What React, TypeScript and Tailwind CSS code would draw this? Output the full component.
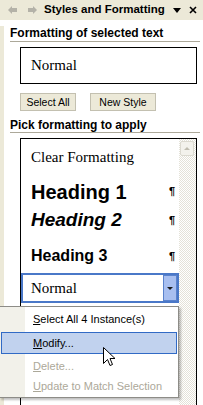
import React from "react";

const sans = "font-['Liberation_Sans',Arial,sans-serif]";
const serif = "font-['Liberation_Serif','Times_New_Roman',serif]";

function NavArrow({ dir }: { dir: "left" | "right" }) {
  return (
    <svg width="9" height="8" viewBox="0 0 9 8" className={dir === "left" ? "" : "-scale-x-100"}>
      <path d="M0 4 L4 0 L4 2 L9 2 L9 6 L4 6 L4 8 Z" fill="#b4b2a8" />
    </svg>
  );
}

function Cursor() {
  return (
    <svg width="13" height="21" viewBox="0 0 13 21">
      <path
        d="M0.5 0.5 L0.5 16.5 L4.5 12.5 L7 18.5 L9.5 17.5 L7 11.5 L12 11.5 Z"
        fill="#fff"
        stroke="#000"
        strokeWidth="1"
        strokeLinejoin="miter"
      />
    </svg>
  );
}

export default function App() {
  return (
    <div className={`relative w-[203px] h-[405px] overflow-hidden bg-white ${sans}`}>
      {/* task pane title bar */}
      <div className="h-[20px] bg-[#ECE9D8] flex items-center pl-[8px] pr-[6px]">
        <NavArrow dir="left" />
        <div className="w-[11px]" />
        <NavArrow dir="right" />
        <span className="ml-[7px] text-[11.5px] font-bold text-black leading-none whitespace-nowrap">Styles and Formatting</span>
        <svg width="8" height="5" viewBox="0 0 8 5" className="ml-auto shrink-0">
          <path d="M0 0 L8 0 L4 5 Z" fill="#000" />
        </svg>
        <svg width="8" height="8" viewBox="0 0 8 8" className="ml-[8px] shrink-0">
          <path d="M1 1 L7 7 M7 1 L1 7" stroke="#000" strokeWidth="1.6" />
        </svg>
      </div>

      <div className="border-l-[4px] border-[#ECE9D8] h-[385px]">
        {/* current selection */}
        <div className="ml-[6px] mr-[3px] mt-[6px] h-[16px] border-b border-[#aca899] text-[12px] font-bold leading-[15px] text-black">
          Formatting of selected text
        </div>
        <div className="ml-[16px] mt-[5px] w-[177px] h-[37px] border border-black flex items-center pl-[10px]">
          <span className={`${serif} text-[15px] text-black`}>Normal</span>
        </div>
        <div className="ml-[16px] mt-[9px] flex gap-[14px]">
          <button className="w-[56px] h-[18px] bg-[#ECE9D8] border border-[#c3c0b0] text-[10.5px] text-black leading-none">
            Select All
          </button>
          <button className="w-[66px] h-[18px] bg-[#ECE9D8] border border-[#c3c0b0] text-[10.5px] text-black leading-none">
            New Style
          </button>
        </div>

        {/* style list */}
        <div className="ml-[6px] mr-[3px] mt-[7px] h-[15px] border-b border-[#aca899] text-[12px] font-bold leading-[14px] text-black">
          Pick formatting to apply
        </div>
        <div className="ml-[16px] mt-[5px] w-[177px] h-[280px] border border-black flex">
          <div className="w-[159px] flex flex-col">
            <div className="h-[36px] flex items-center pl-[10px]">
              <span className={`${serif} text-[15px] text-black`}>Clear Formatting</span>
            </div>
            <div className="h-[31px] flex items-center pl-[10px] pr-[4px] pt-[2px]">
              <span className="text-[20px] font-bold text-black">Heading 1</span>
              <span className="ml-auto text-[11px] font-bold">¶</span>
            </div>
            <div className="h-[28px] flex items-center pl-[10px] pr-[4px]">
              <span className="text-[19px] font-bold italic text-black">Heading 2</span>
              <span className="ml-auto text-[11px] font-bold">¶</span>
            </div>
            <div className="h-[39px] flex items-center pl-[10px] pr-[4px] pt-[5px]">
              <span className="text-[16px] font-bold text-black">Heading 3</span>
              <span className="ml-auto text-[11px] font-bold">¶</span>
            </div>
            <div className="h-[30px] border-2 border-[#4a78c8] flex items-center">
              <span className={`${serif} pl-[8px] text-[15px] text-black`}>Normal</span>
              <div className="ml-auto h-full w-[14px] bg-[#a8bff0] border border-[#5a82cc] flex items-center justify-center">
                <svg width="6" height="3" viewBox="0 0 6 3">
                  <path d="M0 0 L6 0 L3 3 Z" fill="#1a1a1a" />
                </svg>
              </div>
            </div>
          </div>
          <div className="w-[17px] h-full bg-[repeating-conic-gradient(#ffffff_0%_25%,#e4e2d8_0%_50%)] bg-[length:2px_2px] pt-[2px] pl-[1px]">
            <div className="w-[14px] h-[15px] bg-[#f3f2ec] border border-[#dcdad0] rounded-[2px] flex items-center justify-center">
              <svg width="6" height="3" viewBox="0 0 6 3">
                <path d="M0 3 L6 3 L3 0 Z" fill="#c0bdb0" />
              </svg>
            </div>
          </div>
        </div>
      </div>

      {/* context menu */}
      <div className="absolute left-[-1px] top-[306px] w-[180px] border border-[#8d8c87] bg-white shadow-[2px_2px_2px_rgba(0,0,0,0.25)] text-[11px]">
        <div className="absolute left-0 top-0 bottom-0 w-[25px] bg-[#f2f1ea]" />
        <div className="relative h-[24px] flex items-center pl-[33px] text-black">
          <span><span className="underline">S</span>elect All 4 Instance(s)</span>
        </div>
        <div className="relative h-[24px] px-[1px] py-[1px]">
          <div className="h-full bg-[#c1d2ee] border border-[#316ac5] flex items-center pl-[31px] text-black">
            <span><span className="underline">M</span>odify...</span>
          </div>
        </div>
        <div className="relative h-[23px] flex items-center pl-[33px] text-[#aca899]">
          <span><span className="underline">D</span>elete...</span>
        </div>
        <div className="relative h-[19px] flex items-start pl-[33px] text-[#aca899]">
          <span><span className="underline">U</span>pdate to Match Selection</span>
        </div>
      </div>

      <div className="absolute left-[103px] top-[347px]">
        <Cursor />
      </div>
    </div>
  );
}
